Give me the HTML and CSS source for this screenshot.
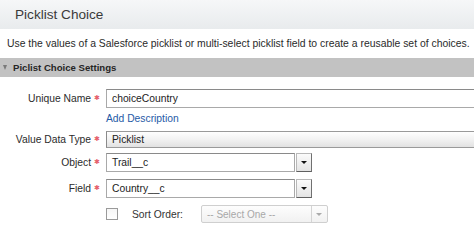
FILE: index.html
```html
<!DOCTYPE html>
<html>
<head>
<meta charset="utf-8">
<link rel="stylesheet" href="styles.css">
</head>
<body>
<div class="page">
  <div class="header"><h1 class="title">Picklist Choice</h1></div>
  <div class="desc">Use the values of a Salesforce picklist or multi-select picklist field to create a reusable set of choices.</div>
  <div class="section"><span class="tri"></span><span class="section-title">Piclist Choice Settings</span></div>
  <div class="form">
    <div class="row r-name">
      <label class="lbl">Unique Name</label><span class="req">✱</span>
      <div class="input wide">choiceCountry</div>
    </div>
    <div class="row r-add">
      <span class="lbl"></span><span class="noreq"></span>
      <a class="link">Add Description</a>
    </div>
    <div class="row r-type">
      <label class="lbl">Value Data Type</label><span class="req">✱</span>
      <div class="select wide">Picklist</div>
    </div>
    <div class="row r-obj">
      <label class="lbl">Object</label><span class="req">✱</span>
      <div class="combo"><div class="input short">Trail__c</div><div class="btn"><span class="arrow"></span></div></div>
    </div>
    <div class="row r-field">
      <label class="lbl">Field</label><span class="req">✱</span>
      <div class="combo"><div class="input short">Country__c</div><div class="btn"><span class="arrow"></span></div></div>
    </div>
    <div class="row r-sort">
      <span class="lbl"></span><span class="noreq"></span>
      <div class="sortwrap">
        <span class="check"></span>
        <span class="sort-lbl">Sort Order:</span>
        <div class="dsel"><span class="dsel-text">-- Select One --</span><span class="dsel-btn"><span class="darrow"></span></span></div>
      </div>
    </div>
  </div>
</div>
</body>
</html>
```
FILE: styles.css
```css
html, body { margin: 0; padding: 0; overflow: hidden; background: #fff; }
body { width: 474px; height: 239px; font-family: "Liberation Sans", Arial, sans-serif; color: #333; }
.page { width: 474px; }
.header {
  height: 29px;
  background: linear-gradient(#f6f7f8, #e8ebed);
  display: flex; align-items: center;
}
.title { margin: 0 0 1px 15px; font-size: 13.6px; font-weight: normal; color: #3a3a3a; }
.desc { height: 29px; line-height: 29px; padding-left: 7px; font-size: 10.4px; color: #2a2a2a; white-space: nowrap; }
.section {
  height: 19px; background: #c2c2c2;
  display: flex; align-items: center;
}
.tri {
  width: 0; height: 0; margin-left: 3px; margin-right: 6px;
  border-left: 2.5px solid transparent; border-right: 2.5px solid transparent;
  border-top: 5px solid #7a7a7a;
}
.section-title { font-size: 9.6px; font-weight: bold; color: #262626; }
.form { padding-top: 12px; display: flex; flex-direction: column; }
.row { display: grid; grid-template-columns: 91px 15px 1fr; align-items: center; font-size: 10.3px; }
.lbl { text-align: right; color: #2b2b2b; }
.req { color: #e5606c; font-family: "DejaVu Sans", sans-serif; font-size: 7px; padding-left: 3px; line-height: 1; }
.input {
  box-sizing: border-box; height: 19px; line-height: 17px;
  border: 1px solid #a9a9a9; border-top-color: #8a8a8a;
  padding-left: 5px; color: #222; background: #fff;
}
.wide { width: 380px; }
.r-add { margin-top: 1px; height: 18px; }
.link { color: #1f5aa6; font-size: 10.3px; }
.r-type { margin-top: 4px; }
.select {
  box-sizing: border-box; height: 17px; line-height: 15px;
  border: 1px solid #9a9a9a; border-left-color: #8a8a8a;
  background: linear-gradient(#fefefe, #f2f2f2 50%, #e2e2e2);
  padding-left: 5px; color: #222;
}
.r-obj { margin-top: 5px; }
.r-field { margin-top: 7px; }
.combo { display: flex; align-items: stretch; height: 19px; }
.short { width: 189px; height: 19px; }
.btn {
  box-sizing: border-box; width: 16px; margin-left: 1px;
  border: 1px solid #b8b8b8; border-right-color: #707070; border-bottom-color: #606060;
  background: linear-gradient(#fbfbfb, #e4e4e4);
  display: flex; align-items: center; justify-content: center;
}
.arrow { width: 0; height: 0; border-left: 3px solid transparent; border-right: 3px solid transparent; border-top: 3px solid #111; }
.r-sort { margin-top: 7px; }
.sortwrap { display: flex; align-items: center; }
.check {
  box-sizing: border-box; width: 12px; height: 12px;
  border: 1px solid #9a9a9a; background: linear-gradient(#f6f6f6, #fff);
}
.sort-lbl { margin-left: 14px; color: #333; }
.dsel {
  box-sizing: border-box; margin-left: 18px; width: 127px; height: 18px;
  border: 1px solid #cfcfcf; border-radius: 2px;
  background: linear-gradient(#fdfdfd, #f1f1f1);
  display: flex; align-items: center;
}
.dsel-text { flex: 1; padding-left: 5px; color: #a8a8a8; font-size: 10px; }
.dsel-btn { width: 15px; align-self: stretch; border-left: 1px solid #d4d4d4; display: flex; align-items: center; justify-content: center; }
.darrow { width: 0; height: 0; border-left: 3px solid transparent; border-right: 3px solid transparent; border-top: 3px solid #aaa; }
```
